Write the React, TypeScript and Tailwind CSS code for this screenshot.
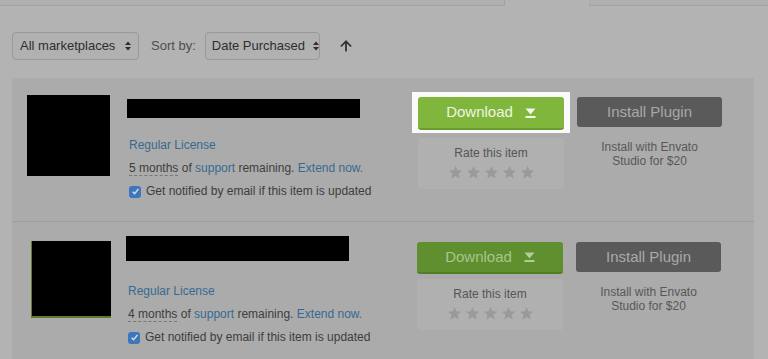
import { ArrowUp } from "lucide-react"

type RowProps = {
  months: number
  highlight?: boolean
  imgClass: string
  titleClass: string
  bodyClass: string
  rightClass: string
  dlClass: string
  divider?: boolean
}

const SelectArrows = () => (
  <svg width="6" height="10" viewBox="0 0 6 10" className="ml-2 shrink-0">
    <path d="M0 4 L3 0.5 L6 4 Z" fill="#2e2e2e" />
    <path d="M0 6 L3 9.5 L6 6 Z" fill="#2e2e2e" />
  </svg>
)

const Star = () => (
  <svg width="15" height="15" viewBox="0 0 24 24">
    <path
      d="M12 1.5l3.1 6.9 7.4.7-5.6 5 1.7 7.4L12 17.6l-6.6 3.9 1.7-7.4-5.6-5 7.4-.7z"
      fill="#9a9a9a"
    />
  </svg>
)

const Check = () => (
  <span className="w-[12px] h-[12px] rounded-[3px] bg-[#3d76bd] flex items-center justify-center mr-[5px]">
    <svg width="9" height="9" viewBox="0 0 10 10">
      <path d="M1.8 5.2 L4 7.4 L8.3 2.3" stroke="#d8d8d8" strokeWidth="1.7" fill="none" />
    </svg>
  </span>
)

const DownloadIcon = ({ color }: { color: string }) => (
  <svg width="11" height="10" viewBox="0 0 11 10" className="ml-[12px]">
    <path d="M0.5 0.5 L10.5 0.5 L5.5 6.5 Z" fill={color} />
    <rect x="0.5" y="8" width="10" height="2" fill={color} />
  </svg>
)

const ItemRow = ({
  months,
  highlight,
  imgClass,
  titleClass,
  bodyClass,
  rightClass,
  dlClass,
  divider,
}: RowProps) => {
  return (
    <div className={`flex ${divider ? "border-b border-[#9d9d9d]" : ""}`}>
      <div className={`bg-black shrink-0 ${imgClass}`}></div>
      <div className="flex flex-col w-[291px] shrink-0">
        <div className={`bg-black ${titleClass}`}></div>
        <div className={`flex flex-col text-[12px] leading-[23px] text-[#3d3d3d] ${bodyClass}`}>
          <span className="text-[#376a90] ml-[2px]">Regular License</span>
          <span className="ml-[2px]">
            <span className="border-b border-dashed border-[#777] leading-[14px] inline-block">
              {months} months
            </span>{" "}
            of <span className="text-[#376a90]">support</span> remaining.{" "}
            <span className="text-[#376a90]">Extend now.</span>
          </span>
          <span className="flex items-center ml-[2px]">
            <Check />
            Get notified by email if this item is updated
          </span>
        </div>
      </div>
      <div className={`flex gap-[13px] ${rightClass}`}>
        <div className="flex flex-col w-[146px]">
          {highlight ? (
            <div className="bg-[#fafafa] -mx-[6px] -mt-[5px] px-[6px] pt-[5px] pb-[3px]">
              <div
                className={`flex items-center justify-center rounded-[3px] bg-[#80b63c] border-b-2 border-[#6b9c31] text-[#eef5e4] text-[15px] ${dlClass}`}
              >
                Download
                <DownloadIcon color="#f2f7ea" />
              </div>
            </div>
          ) : (
            <div
              className={`flex items-center justify-center rounded-[3px] bg-[#5f8f2e] border-b-2 border-[#527d27] text-[#aac68d] text-[15px] ${dlClass}`}
            >
              Download
              <DownloadIcon color="#b3cc98" />
            </div>
          )}
          <div className="mt-[5px] h-[51px] rounded-[3px] bg-[#b0b0b0] flex flex-col items-center pt-[7px]">
            <span className="text-[12px] text-[#555] leading-[16px]">Rate this item</span>
            <div className="flex gap-[3px] mt-[4px]">
              <Star />
              <Star />
              <Star />
              <Star />
              <Star />
            </div>
          </div>
        </div>
        <div className="flex flex-col w-[145px]">
          <div className="h-[30px] rounded-[3px] bg-[#5a5a5a] flex items-center justify-center text-[15px] text-[#a9a9a9]">
            Install Plugin
          </div>
          <div className="mt-[13px] text-center text-[12px] leading-[14px] text-[#585858]">
            Install with Envato
            <br />
            Studio for $20
          </div>
        </div>
      </div>
    </div>
  )
}

export default function App() {
  return (
    <div
      className="w-[768px] h-[359px] overflow-hidden bg-[#b3b3b3] flex flex-col"
      style={{ fontFamily: '"Liberation Sans", Arial, sans-serif' }}
    >
      <div className="flex h-[6px] shrink-0">
        <div className="w-[505px] border-b border-r border-[#a2a2a2] bg-[#b0b0b0]"></div>
        <div className="w-[85px] border-r border-[#a9a9a9]"></div>
        <div className="flex-1 border-b border-[#a2a2a2] bg-[#b0b0b0]"></div>
      </div>
      <div className="flex items-start h-[72px] shrink-0 pl-[12px] pt-[26px] whitespace-nowrap">
        <div className="flex items-center justify-between h-[28px] w-[127px] px-[7px] rounded-[4px] border border-[#999] bg-[#b1b1b1] text-[13px] text-[#2e2e2e]">
          All marketplaces
          <SelectArrows />
        </div>
        <span className="ml-[12px] h-[28px] flex items-center text-[13px] text-[#4e4e4e]">Sort by:</span>
        <div className="ml-[9px] flex items-center justify-between h-[28px] w-[115px] px-[6px] rounded-[4px] border border-[#999] bg-[#b1b1b1] text-[13px] text-[#2e2e2e]">
          Date Purchased
          <SelectArrows />
        </div>
        <div className="h-[28px] flex items-center ml-[18px]">
          <ArrowUp size={16} strokeWidth={2.6} color="#2e2e2e" />
        </div>
      </div>
      <div className="ml-[12px] w-[742px] flex-1 bg-[#ababab] flex flex-col">
        <ItemRow
          months={5}
          highlight
          divider
          imgClass="w-[83px] h-[81px] ml-[15px] mt-[17px] mr-[17px]"
          titleClass="w-[233px] h-[19px] mt-[21px]"
          bodyClass="mt-[16px] pb-[18px]"
          rightClass="pt-[19px]"
          dlClass="h-[33px]"
        />
        <ItemRow
          months={4}
          imgClass="w-[80px] h-[77px] ml-[19px] mt-[19px] mr-[15px] border-b-2 border-l border-[#5d7d2c]"
          titleClass="w-[223px] h-[25px] mt-[14px]"
          bodyClass="mt-[19px]"
          rightClass="pt-[20px]"
          dlClass="h-[32px]"
        />
      </div>
    </div>
  )
}
